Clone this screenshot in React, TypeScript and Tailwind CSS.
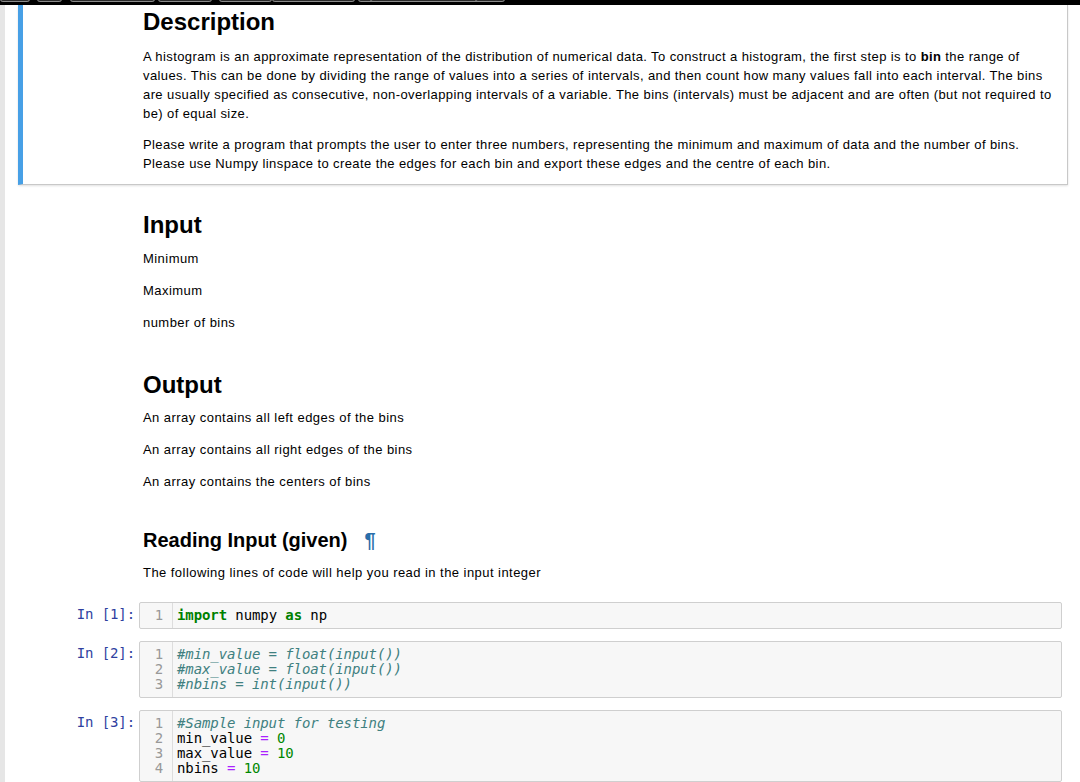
import React from "react"

const sans = { fontFamily: '"Liberation Sans", Arial, sans-serif' }
const mono = { fontFamily: '"DejaVu Sans Mono", "Liberation Mono", monospace' }

type Tok = { t: string; c?: string }

const K = "text-[#008000] font-bold"
const C = "text-[#408080] italic"
const O = "text-[#aa22ff]"
const N = "text-[#008800]"

const cells: { n: number; lines: Tok[][] }[] = [
  { n: 1, lines: [[{ t: "import", c: K }, { t: " numpy " }, { t: "as", c: K }, { t: " np" }]] },
  {
    n: 2,
    lines: [
      [{ t: "#min_value = float(input())", c: C }],
      [{ t: "#max_value = float(input())", c: C }],
      [{ t: "#nbins = int(input())", c: C }],
    ],
  },
  {
    n: 3,
    lines: [
      [{ t: "#Sample input for testing", c: C }],
      [{ t: "min_value " }, { t: "=", c: O }, { t: " " }, { t: "0", c: N }],
      [{ t: "max_value " }, { t: "=", c: O }, { t: " " }, { t: "10", c: N }],
      [{ t: "nbins " }, { t: "=", c: O }, { t: " " }, { t: "10", c: N }],
    ],
  },
]

function CodeCell({ n, lines }: { n: number; lines: Tok[][] }) {
  return (
    <div className="flex items-start" style={mono}>
      <div className="w-[134px] pr-[4px] pt-[5px] text-right text-[14px] leading-[15px] tracking-[-0.1px] text-[#303f9f]">
        In [{n}]:
      </div>
      <div className="flex w-[923px] rounded-[2px] border border-[#cfcfcf] bg-[#f7f7f7] text-[14px] leading-[15px] tracking-[-0.1px]">
        <div className="w-[33px] shrink-0 border-r border-[#dddddd] pt-[5px] pb-[5px] pr-[9px] text-right text-[#999999]">
          {lines.map((_, i) => (
            <div key={i} className="h-[15px]">{i + 1}</div>
          ))}
        </div>
        <div className="pl-[4px] pt-[5px] pb-[5px] text-[#000000] whitespace-pre">
          {lines.map((l, i) => (
            <div key={i} className="h-[15px] leading-[14px]">
              {l.map((tk, j) => (
                <span key={j} className={tk.c}>
                  {tk.t}
                </span>
              ))}
            </div>
          ))}
        </div>
      </div>
    </div>
  )
}

export default function App() {
  const buttons = [
    [0, 30], [37, 25], [70, 85], [158, 54], [219, 53], [272, 83], [358, 107], [370, 110], [475, 30],
  ]
  return (
    <div className="relative h-[782px] w-[1080px] overflow-hidden bg-white text-black" style={sans}>
      {/* toolbar remnant */}
      <div className="relative h-[5px] w-full bg-black">
        {buttons.map(([x, w], i) => (
          <div
            key={i}
            className="absolute top-[-1px] h-[3px] rounded-b-[3px] border border-[#8a8a8a] bg-[#2a2a2a]"
            style={{ left: x, width: w }}
          />
        ))}
      </div>

      <div className="flex">
        <div className="h-[777px] w-[5px] shrink-0 bg-[#e6e6e6]" />
        <div className="flex-1">
          {/* Description cell */}
          <div className="ml-[13px] w-[1050px] border border-t-0 border-l-[5px] border-[#c8c8c8] border-l-[#47a0e6] pl-[120px] pr-[11px] pt-[3px] pb-[11px] shadow-[0_1px_2px_rgba(0,0,0,0.12)]">
            <h2 className="text-[24px] font-bold leading-[28px]">Description</h2>
            <p className="mt-[11px] text-[13px] leading-[19px] tracking-[0.4px]">
              A histogram is an approximate representation of the distribution of numerical data. To construct a histogram, the first step is to <b>bin</b> the range of values. This can be done by dividing the range of values into a series of intervals, and then count how many values fall into each interval. The bins are usually specified as consecutive, non-overlapping intervals of a variable. The bins (intervals) must be adjacent and are often (but not required to be) of equal size.
            </p>
            <p className="mt-[12px] text-[13px] leading-[19px] tracking-[0.4px]">
              Please write a program that prompts the user to enter three numbers, representing the minimum and maximum of data and the number of bins. Please use Numpy linspace to create the edges for each bin and export these edges and the centre of each bin.
            </p>
          </div>

          <div className="pl-[138px] text-[13px] leading-[19px] tracking-[0.45px]">
            <h2 className="mt-[26px] text-[24px] font-bold leading-[28px] tracking-normal">Input</h2>
            <div className="mt-[10px] flex flex-col gap-[13px]">
              <p>Minimum</p>
              <p>Maximum</p>
              <p>number of bins</p>
            </div>

            <h2 className="mt-[39px] text-[24px] font-bold leading-[28px] tracking-normal">Output</h2>
            <div className="mt-[9px] flex flex-col gap-[13px]">
              <p>An array contains all left edges of the bins</p>
              <p>An array contains all right edges of the bins</p>
              <p>An array contains the centers of bins</p>
            </div>

            <h2 className="mt-[35px] flex items-center text-[20px] font-bold leading-[28px] tracking-normal">
              Reading Input (given)
              <span className="ml-[17px] text-[20px] font-bold text-[#296eaa]">¶</span>
            </h2>
            <p className="mt-[9px]">The following lines of code will help you read in the input integer</p>
          </div>

          <div className="mt-[20px] flex flex-col gap-[12px]">
            {cells.map((c) => (
              <CodeCell key={c.n} n={c.n} lines={c.lines} />
            ))}
          </div>
        </div>
      </div>
    </div>
  )
}
